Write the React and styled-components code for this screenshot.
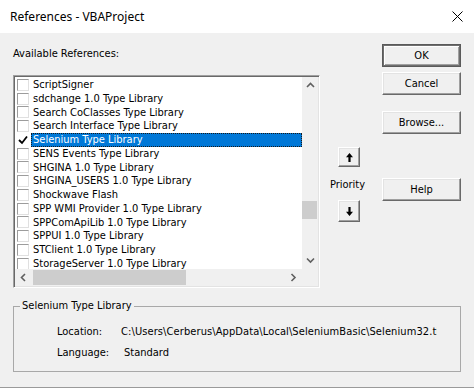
import React from "react";
import styled, { createGlobalStyle } from "styled-components";

const UI_FONT = `"DejaVu Sans Condensed", "DejaVu Sans", "Liberation Sans", sans-serif`;

const GlobalStyle = createGlobalStyle`
  html, body { margin: 0; padding: 0; background: #f0f0f0; }
  * { box-sizing: border-box; }
`;

const Window = styled.div`
  width: 474px;
  height: 388px;
  display: flex;
  flex-direction: column;
  background: #f0f0f0;
  font-family: ${UI_FONT};
  font-size: 11px;
  color: #000;
  overflow: hidden;
  border-bottom: 1px solid #9a9a9a;
`;

const TitleBar = styled.div`
  height: 33px;
  flex: none;
  background: #fff;
  display: flex;
  align-items: center;
  justify-content: space-between;
  padding: 0 11px 0 10px;
  font-family: "Noto Sans", "Open Sans", sans-serif;
  font-size: 12px;
`;

const Body = styled.div`
  display: flex;
  flex-direction: column;
  padding: 11px 13px 0 13px;
`;

const TopRow = styled.div`
  display: flex;
  align-items: flex-start;
`;

const LeftCol = styled.div`
  width: 307px;
  display: flex;
  flex-direction: column;
`;

const Caption = styled.div`
  line-height: 14px;
  margin: 3px 0 14px 0;
`;

const ListBox = styled.div`
  height: 213px;
  width: 307px;
  background: #fff;
  border: 1px solid;
  border-color: #a0a0a0 #fff #fff #a0a0a0;
  padding: 1px;
  box-shadow: inset 1px 1px 0 #696969, inset -1px -1px 0 #e3e3e3;
  display: grid;
  grid-template-columns: 1fr 16px;
  grid-template-rows: 1fr 17px;
`;

const Rows = styled.div`
  overflow: hidden;
  background: #fff;
  padding-top: 1px;
`;

const Row = styled.div`
  height: 13.75px;
  display: flex;
  align-items: center;
  white-space: nowrap;
`;

const Box = styled.span`
  width: 12px;
  height: 12px;
  flex: none;
  margin: 0 2px 0 2px;
  border: 1px solid;
  border-color: ${(p) => (p.$checked ? "#fff" : "#9c9c9c #e0e0e0 #e0e0e0 #9c9c9c")};
  background: #fff;
  display: flex;
  align-items: center;
  justify-content: center;
`;

const RowText = styled.span`
  flex: 1;
  height: 13.75px;
  line-height: 12px;
  padding-left: 1px;
  border: 1px ${(p) => (p.$selected ? "dotted #1a1a1a" : "solid transparent")};
  background: ${(p) => (p.$selected ? "#0078d7" : "transparent")};
  color: ${(p) => (p.$selected ? "#fff" : "#000")};
`;

const VScroll = styled.div`
  background: #f0f0f0;
  display: flex;
  flex-direction: column;
`;

const HScroll = styled.div`
  background: #f0f0f0;
  display: flex;
`;

const Corner = styled.div`
  background: #f0f0f0;
`;

const ArrowCell = styled.div`
  width: ${(p) => (p.$h ? "17px" : "16px")};
  height: 17px;
  flex: none;
  display: flex;
  align-items: center;
  justify-content: center;
`;

const Track = styled.div`
  flex: 1;
  display: flex;
  flex-direction: ${(p) => (p.$h ? "row" : "column")};
`;

const Thumb = styled.div`
  background: #cdcdcd;
  ${(p) =>
    p.$h
      ? `width: ${p.$size}px; height: 15px; margin: 1px 0 0 ${p.$offset}px;`
      : `height: ${p.$size}px; width: 15px; margin: ${p.$offset}px 0 0 0;`}
`;

const PriorityCol = styled.div`
  width: 37px;
  margin-left: 9px;
  padding-top: 103px;
  display: flex;
  flex-direction: column;
  align-items: center;
`;

const SmallButton = styled.button`
  width: 22px;
  height: ${(p) => p.$h}px;
  margin: ${(p) => p.$mt}px 0 0 3px;
  padding: 0;
  background: #f0f0f0;
  border: 1px solid;
  border-color: #fff #696969 #696969 #fff;
  box-shadow: inset -1px -1px 0 #a0a0a0, inset 1px 1px 0 #e3e3e3;
  display: flex;
  align-items: center;
  justify-content: center;
`;

const PriorityLabel = styled.div`
  line-height: 14px;
  margin-top: 11px;
`;

const ButtonCol = styled.div`
  width: 79px;
  margin-left: 16px;
  display: flex;
  flex-direction: column;
`;

const DlgButton = styled.button`
  height: 23px;
  width: 79px;
  margin-top: ${(p) => p.$mt || 0}px;
  padding: 0;
  font-family: ${UI_FONT};
  font-size: 11px;
  color: #000;
  background: #f0f0f0;
  border: 1px solid;
  border-color: ${(p) => (p.$default ? "#5a5a5a" : "#fff #696969 #696969 #fff")};
  box-shadow: ${(p) =>
    p.$default
      ? "inset 1px 1px 0 #6e6e6e, inset -1px -1px 0 #6e6e6e, inset 2px 2px 0 #fff, inset -2px -2px 0 #a0a0a0"
      : "inset -1px -1px 0 #a0a0a0, inset 1px 1px 0 #e3e3e3"};
`;

const GroupBox = styled.fieldset`
  margin: 11px 0 0 0;
  padding: 12px 0 11px 0;
  border: 1px solid #a8a8a8;
  min-width: 0;
`;

const Legend = styled.legend`
  padding: 0 2px;
  margin-left: 6px;
  line-height: 14px;
`;

const InfoRow = styled.div`
  display: flex;
  line-height: 14px;
  margin: ${(p) => p.$mt || 0}px 0 0 43px;
  white-space: nowrap;
`;

const InfoLabel = styled.span`
  flex: 0 0 ${(p) => p.$w}px;
`;

const InfoValue = styled.span`
  display: block;
  flex: 0 0 316px;
  min-width: 0;
  overflow: hidden;
  text-overflow: clip;
  letter-spacing: ${(p) => (p.$wide ? "0.1px" : "0")};
`;

const Chevron = ({ dir }) => {
  const pts = {
    up: "1,5 4.5,1.5 8,5",
    down: "1,1.5 4.5,5 8,1.5",
    left: "5,1 1.5,4.5 5,8",
    right: "1.5,1 5,4.5 1.5,8",
  }[dir];
  const horiz = dir === "left" || dir === "right";
  return (
    <svg width={horiz ? 7 : 9} height={horiz ? 9 : 7} viewBox={horiz ? "0 0 7 9" : "0 0 9 7"}>
      <polyline points={pts} fill="none" stroke="#606060" strokeWidth="1.6" />
    </svg>
  );
};

const BoldArrow = ({ down }) => (
  <svg width="7" height="9" viewBox="0 0 7 9" style={down ? { transform: "rotate(180deg)" } : undefined}>
    <path d="M3.5 0 L7 4.2 L4.6 4.2 L4.6 9 L2.4 9 L2.4 4.2 L0 4.2 Z" fill="#000" />
  </svg>
);

const items = [
  "ScriptSigner",
  "sdchange 1.0 Type Library",
  "Search CoClasses Type Library",
  "Search Interface Type Library",
  "Selenium Type Library",
  "SENS Events Type Library",
  "SHGINA 1.0 Type Library",
  "SHGINA_USERS 1.0 Type Library",
  "Shockwave Flash",
  "SPP WMI Provider 1.0 Type Library",
  "SPPComApiLib 1.0 Type Library",
  "SPPUI 1.0 Type Library",
  "STClient 1.0 Type Library",
  "StorageServer 1.0 Type Library",
  "StorageServerPS 1.0 Type Library",
];

const SELECTED = 4;

export default function App() {
  return (
    <>
      <GlobalStyle />
      <Window>
        <TitleBar>
          <span>References - VBAProject</span>
          <svg width="11" height="11" viewBox="0 0 11 11">
            <path d="M0.5 0.5 L10.5 10.5 M10.5 0.5 L0.5 10.5" stroke="#000" strokeWidth="1" />
          </svg>
        </TitleBar>
        <Body>
          <TopRow>
            <LeftCol>
              <Caption>Available References:</Caption>
              <ListBox>
                <Rows>
                  {items.map((t, i) => (
                    <Row key={t}>
                      <Box $checked={i === SELECTED}>
                        {i === SELECTED && (
                          <svg width="10" height="10" viewBox="0 0 10 10">
                            <path d="M1 5 L4 8 L9 1.5" fill="none" stroke="#000" strokeWidth="1.8" />
                          </svg>
                        )}
                      </Box>
                      <RowText $selected={i === SELECTED}>{t}</RowText>
                    </Row>
                  ))}
                </Rows>
                <VScroll>
                  <ArrowCell>
                    <Chevron dir="up" />
                  </ArrowCell>
                  <Track>
                    <Thumb $size={18} $offset={107} />
                  </Track>
                  <ArrowCell>
                    <Chevron dir="down" />
                  </ArrowCell>
                </VScroll>
                <HScroll>
                  <ArrowCell $h>
                    <Chevron dir="left" />
                  </ArrowCell>
                  <Track $h>
                    <Thumb $h $size={153} $offset={1} />
                  </Track>
                  <ArrowCell $h>
                    <Chevron dir="right" />
                  </ArrowCell>
                </HScroll>
                <Corner />
              </ListBox>
            </LeftCol>
            <PriorityCol>
              <SmallButton $h={20} $mt={0} aria-label="Move up">
                <BoldArrow />
              </SmallButton>
              <PriorityLabel>Priority</PriorityLabel>
              <SmallButton $h={22} $mt={8} aria-label="Move down">
                <BoldArrow down />
              </SmallButton>
            </PriorityCol>
            <ButtonCol>
              <DlgButton $default>OK</DlgButton>
              <DlgButton $mt={5}>Cancel</DlgButton>
              <DlgButton $mt={16}>Browse...</DlgButton>
              <DlgButton $mt={44}>Help</DlgButton>
            </ButtonCol>
          </TopRow>
          <GroupBox>
            <Legend>Selenium Type Library</Legend>
            <InfoRow>
              <InfoLabel $w={64}>Location:</InfoLabel>
              <InfoValue $wide>C:\Users\Cerberus\AppData\Local\SeleniumBasic\Selenium32.tlb</InfoValue>
            </InfoRow>
            <InfoRow $mt={7}>
              <InfoLabel $w={67}>Language:</InfoLabel>
              <InfoValue>Standard</InfoValue>
            </InfoRow>
          </GroupBox>
        </Body>
      </Window>
    </>
  );
}
